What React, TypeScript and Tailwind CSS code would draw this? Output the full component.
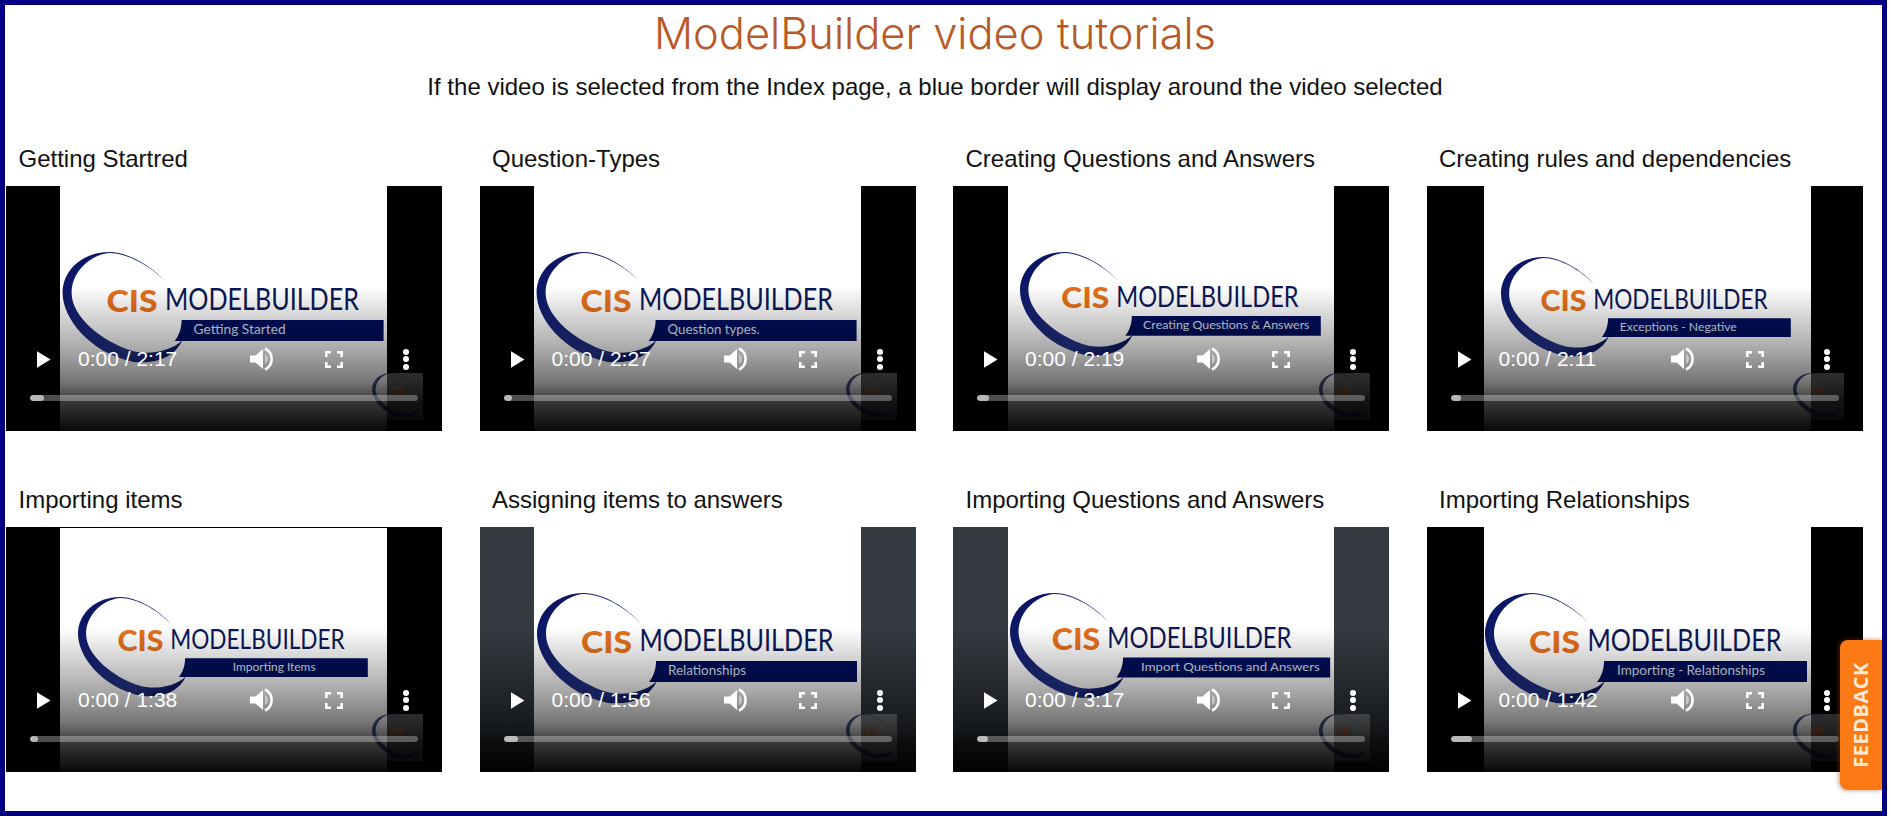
const tutorials = [
  { title: 'Getting Startred', time: '2:17', caption: 'Getting Started', capX: 131, capW: 92, x: 56.6, y: 66, s: 1, barEnd: 321, left: 54, right: 381, buffered: 14, bars: '#000000' },
  { title: 'Question-Types', time: '2:27', caption: 'Question types.', capX: 131, capW: 92, x: 56.6, y: 66, s: 1, barEnd: 320, left: 54, right: 381, buffered: 8, bars: '#000000' },
  { title: 'Creating Questions and Answers', time: '2:19', caption: 'Creating Questions & Answers', capX: 131, capW: 177, x: 67, y: 66, s: 0.94, barEnd: 320, left: 55, right: 381, buffered: 12, bars: '#000000' },
  { title: 'Creating rules and dependencies', time: '2:11', caption: 'Exceptions - Negative', capX: 132, capW: 130, x: 74, y: 71, s: 0.9, barEnd: 322, left: 57, right: 384, buffered: 10, bars: '#000000' },
  { title: 'Importing items', time: '1:38', caption: 'Importing Items', capX: 172, capW: 92, x: 72, y: 70, s: 0.9, barEnd: 322, left: 54, right: 381, buffered: 8, bars: '#000000', topLine: true },
  { title: 'Assigning items to answers', time: '1:56', caption: 'Relationships', capX: 131, capW: 78, x: 57, y: 66, s: 1, barEnd: 320, left: 54, right: 381, buffered: 14, bars: '#343a40' },
  { title: 'Importing Questions and Answers', time: '3:17', caption: 'Import Questions and Answers', capX: 138, capW: 188, x: 57, y: 66, s: 0.95, barEnd: 337, left: 55, right: 381, buffered: 11, bars: '#343a40' },
  { title: 'Importing Relationships', time: '1:42', caption: 'Importing - Relationships', capX: 132, capW: 148, x: 58, y: 66, s: 1, barEnd: 322, left: 57, right: 384, buffered: 21, bars: '#000000' },
];

type Tutorial = (typeof tutorials)[number];

const swooshPath =
  'M104 31C90 14 65 0 47 0C20 0 0 18 0 41C0 65 25 100 71 110C95 112 112 105 120 88C108 100 85 103 70 99C40 90 9 65 9 41C9 18 30 2 47 1C65 1 90 15 104 31Z';

// Poster frame: side bars, white picture, CIS logo and the small watermark
function Poster({ t, id }: { t: Tutorial; id: number }) {
  return (
    <svg viewBox="0 0 436 245" className="absolute inset-0 w-full h-full">
      <defs>
        <linearGradient id={`swoosh-${id}`} x1="0" y1="0" x2="1" y2="1">
          <stop offset="0" stopColor="#050f5c" />
          <stop offset="0.72" stopColor="#26378f" />
          <stop offset="1" stopColor="#000c55" />
        </linearGradient>
      </defs>
      <rect width="436" height="245" fill={t.bars} />
      <rect x={t.left} width={t.right - t.left} height="245" fill="#ffffff" />
      {t.topLine && <rect x={t.left} width={t.right - t.left} height="1" fill="#000000" />}
      <g transform={`translate(${t.x} ${t.y}) scale(${t.s})`}>
        <path d={`M119 68H${t.barEnd}V89H112C117 83 119 75 119 68Z`} fill="#000f5e" />
        <path d={swooshPath} fill={`url(#swoosh-${id})`} />
        <text x="44" y="60" textLength="51" lengthAdjust="spacingAndGlyphs" fontSize="31" fontWeight="900" fill="#e5701a" className="font-[Lato]">
          CIS
        </text>
        <text x="102.4" y="58" textLength="194" lengthAdjust="spacingAndGlyphs" fontSize="30" fill="#0b1858" className="font-[Lato]">
          MODELBUILDER
        </text>
        <text x={t.capX} y="82" textLength={t.capW} lengthAdjust="spacingAndGlyphs" fontSize="13" fill="#dfe4f2" className="font-[Lato]">
          {t.caption}
        </text>
      </g>
      <rect x="381" y="187" width="36" height="47" fill="#ffffff" opacity="0.34" />
      <path d={swooshPath} fill="#0c1a60" opacity="0.75" transform="translate(366 187) scale(0.4)" />
      <text x="384" y="208" fontSize="9" fontWeight="700" fill="#b5561a" className="font-[Lato]">
        CIS
      </text>
    </svg>
  );
}

function VideoCard({ t, id }: { t: Tutorial; id: number }) {
  return (
    <div>
      <h3 className="h-[34px] mb-[10px] pl-[12.5px] text-[24px] leading-[34px] text-[#111] font-normal">{t.title}</h3>
      <div className="relative w-[436px] h-[245px] overflow-hidden">
        <Poster t={t} id={id} />
        <div className="absolute inset-0 bg-[linear-gradient(to_bottom,rgba(0,0,0,0)_41%,rgba(0,0,0,0.12)_50%,rgba(0,0,0,0.33)_66%,rgba(0,0,0,0.54)_80%,rgba(0,0,0,0.78)_88%,rgba(0,0,0,0.97)_100%)]" />

        {/* Native-looking player controls */}
        <div className="absolute inset-x-0 top-[160px] text-white">
          <div className="flex items-center h-[26px] pl-[31px]">
            <svg viewBox="0 0 14 17" className="w-[13.5px] h-[17px] shrink-0" fill="#ffffff">
              <path d="M0 0L14 8.5L0 17Z" />
            </svg>
            <span className="w-[99px] ml-[27.5px] text-[21px] leading-[26px] whitespace-nowrap">0:00 / {t.time}</span>
            <svg viewBox="0 0 23 24" className="w-[23px] h-[24px] ml-[73px] shrink-0" fill="#ffffff">
              <path d="M0 8.5H5.5L13 2V22L5.5 15.5H0Z" />
              <path d="M15 7C17 8 18 10 18 12S17 16 15 17Z" opacity="0.45" />
              <path d="M15 1.5C20 4 21.6 8 21.6 12S20 20 15 22.5" fill="none" stroke="#ffffff" strokeWidth="2.6" />
            </svg>
            <svg viewBox="0 0 18 17" className="w-[18px] h-[17px] ml-[52px] shrink-0" fill="none" stroke="#ffffff" strokeWidth="2.6">
              <path d="M1.3 6V1.3H6M12 1.3H16.7V6M16.7 11V15.7H12M6 15.7H1.3V11" />
            </svg>
            <div className="flex flex-col gap-[1.5px] ml-[60px]">
              <div className="w-[6px] h-[6px] rounded-full bg-white" />
              <div className="w-[6px] h-[6px] rounded-full bg-white" />
              <div className="w-[6px] h-[6px] rounded-full bg-white" />
            </div>
          </div>
          <div className="ml-[24px] mt-[23px] w-[388px] h-[6px] rounded-full bg-white/30 overflow-hidden">
            <div className="h-full rounded-full bg-white/60" style={{ width: t.buffered }} />
          </div>
        </div>
      </div>
    </div>
  );
}

export default function App() {
  return (
    <div className="relative w-full h-screen bg-white overflow-hidden font-['Liberation_Sans',Arial,sans-serif]">
      <div className="w-[1887px] h-[816px] border-[5px] border-[#000080] pr-[17px]">
        <h1 className="h-[56px] text-center text-[43.4px] leading-[56px] font-light text-[#b85a28] font-[Inter]">
          ModelBuilder video tutorials
        </h1>
        <p className="mt-[10px] h-[32px] text-center text-[24px] leading-[32px] text-[#111]">
          If the video is selected from the Index page, a blue border will display around the video selected
        </p>
        <div className="mt-[39px] pl-px grid grid-cols-[repeat(4,436px)] gap-x-[37.5px] gap-y-[52px]">
          {tutorials.map((t, i) => (
            <VideoCard key={t.title} t={t} id={i} />
          ))}
        </div>
      </div>

      {/* Feedback tab */}
      <div className="absolute left-[1840px] top-[640px] w-[42px] h-[150px] flex items-center justify-center rounded-l-lg bg-[#fb7a16] shadow-[-1px_0_5px_rgba(120,60,0,0.55)]">
        <span className="-rotate-90 whitespace-nowrap text-[20px] font-bold tracking-[0.5px] text-[#ffe9d6] font-['Open_Sans',sans-serif]">
          FEEDBACK
        </span>
      </div>
    </div>
  );
}
